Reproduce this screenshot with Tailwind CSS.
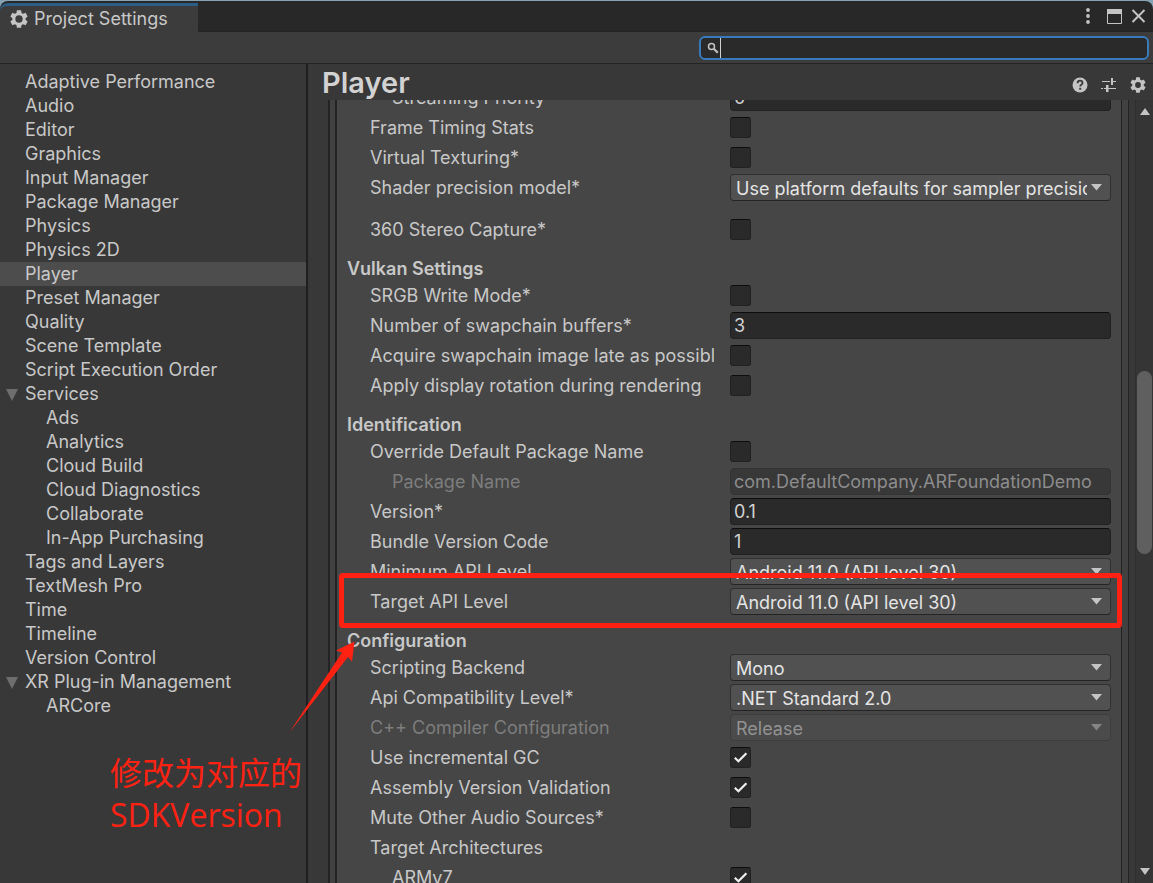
<!DOCTYPE html>
<html lang="zh">
<head>
  <meta charset="UTF-8">
  <meta name="viewport" content="width=device-width, initial-scale=1.0">
  <title>Project Settings</title>
  <script src="https://cdn.jsdelivr.net/npm/@tailwindcss/browser@4"></script>
</head>
<body class="bg-[#86a3b3] font-['Inter','Liberation_Sans',sans-serif] text-lg text-[#c8c8c8]">

  <div class="relative flex flex-col h-screen overflow-hidden border-t border-[#86a3b3]">

    <!-- Tab bar -->
    <header class="flex items-stretch justify-between h-[30px] shrink-0 rounded-t-lg bg-[#282828]">
      <div class="flex items-center gap-1 w-[198px] h-[29px] mt-[2px] pl-2 border-t-3 border-[#2c5d87] rounded-tl-lg bg-[#3c3c3c] leading-6 whitespace-nowrap z-10">
        <svg class="w-[22px] h-[22px] shrink-0" viewBox="0 0 24 24" fill="#c4c4c4"><path d="M19.14 12.94c.04-.3.06-.61.06-.94 0-.32-.02-.64-.07-.94l2.03-1.58c.18-.14.23-.41.12-.61l-1.92-3.32c-.12-.22-.37-.29-.59-.22l-2.39.96c-.5-.38-1.03-.7-1.62-.94L14.4 2.81c-.04-.24-.24-.41-.48-.41h-3.84c-.24 0-.43.17-.47.41L9.25 5.35c-.59.24-1.13.57-1.62.94l-2.39-.96c-.22-.08-.47 0-.59.22L2.74 8.87c-.12.21-.08.47.12.61l2.03 1.58c-.05.3-.09.63-.09.94s.02.64.07.94l-2.03 1.58c-.18.14-.23.41-.12.61l1.92 3.32c.12.22.37.29.59.22l2.39-.96c.5.38 1.03.7 1.62.94l.36 2.54c.05.24.24.41.48.41h3.84c.24 0 .44-.17.47-.41l.36-2.54c.59-.24 1.13-.56 1.62-.94l2.39.96c.22.08.47 0 .59-.22l1.92-3.32c.12-.22.07-.47-.12-.61l-2.01-1.58zM12 16a4 4 0 1 1 0-8 4 4 0 0 1 0 8z"/></svg>
        <h1>Project Settings</h1>
      </div>
      <div class="flex items-center gap-2 pr-[7px]">
        <button type="button" aria-label="Menu" class="w-[14px]">
          <svg class="w-[14px] h-[16px]" viewBox="0 0 14 16" fill="#c4c4c4"><circle cx="7" cy="2" r="1.900"/><circle cx="7" cy="8" r="1.900"/><circle cx="7" cy="14" r="1.900"/></svg>
        </button>
        <button type="button" aria-label="Maximize" class="ml-1">
          <svg class="w-[15px] h-[15px]" viewBox="0 0 15 15"><path d="M.5.5h14v14H.5z" fill="none" stroke="#c4c4c4"/><path d="M0 0h15v5H0z" fill="#c4c4c4"/></svg>
        </button>
        <button type="button" aria-label="Close" class="ml-px">
          <svg class="w-[15px] h-[14px]" viewBox="0 0 15 14" fill="none" stroke="#c4c4c4" stroke-width="2"><path d="M1.500 1l12 12M13.500 1l-12 12"/></svg>
        </button>
      </div>
    </header>

    <!-- Search -->
    <div class="flex justify-end items-center h-[33px] shrink-0 pr-1 bg-[#3c3c3c] border-t border-b border-[#232323]">
      <div class="flex items-center w-[450px] max-w-full h-6 pl-[6px] border-2 border-[#3a79bb] rounded-md bg-[#2a2a2a]">
        <svg class="w-[12px] h-[12px] shrink-0" viewBox="0 0 12 12" fill="none" stroke="#c4c4c4"><circle cx="4.500" cy="4.500" r="3" stroke-width="1.500"/><path d="M6.800 6.800l4 4" stroke-width="2"/></svg>
        <span class="w-px h-5 ml-[1px] bg-[#d2d2d2]"></span>
        <input type="text" aria-label="Search" class="flex-1 min-w-0 outline-none">
      </div>
    </div>

    <div class="flex flex-1 min-h-0">
      <!-- Categories -->
      <nav class="w-[308px] shrink-0 pt-[6px] bg-[#383838] border-r-2 border-[#1f1f1f]">
        <ul id="categories"></ul>
      </nav>

      <main class="flex flex-col flex-1 min-w-0 bg-[#383838]">
        <div class="flex items-center justify-between h-9 shrink-0 pl-[14px] pr-[7px]">
          <h2 class="pt-[2px] text-[29px] leading-9 font-semibold text-[#d2d2d2]">Player</h2>
          <div class="flex items-center gap-[13px] pt-[6px]">
            <button type="button" aria-label="Help">
              <svg class="w-[16px] h-[16px]" viewBox="0 0 16 16"><circle cx="8" cy="8" r="7.500" fill="#c4c4c4"/><path d="M5.600 6.200C5.600 4.600 6.600 3.700 8 3.700s2.500.9 2.500 2.200c0 1.700-2.300 1.800-2.300 3.600" fill="none" stroke="#383838" stroke-width="1.800"/><path d="M7.200 10.800h2v1.900h-2z" fill="#383838"/></svg>
            </button>
            <button type="button" aria-label="Presets">
              <svg class="w-[16px] h-[16px]" viewBox="0 0 16 16" fill="#c4c4c4"><path d="M1 4h8v1H1zM11 4h4v1h-4zM10 1h2v7h-2zM0 11h2v1H0zM3 11h2v1H3zM7 11h8v1H7zM5 8h2.500v7H5z"/></svg>
            </button>
            <button type="button" aria-label="Settings">
              <svg class="w-[16px] h-[16px]" viewBox="2 2 20 20" fill="#c4c4c4"><path d="M19.140 12.940c.04-.3.060-.61.060-.94 0-.32-.02-.64-.07-.94l2.030-1.580c.18-.14.23-.41.12-.61l-1.920-3.320c-.12-.22-.37-.29-.59-.22l-2.390.96c-.5-.38-1.030-.7-1.620-.94L14.400 2.810c-.04-.24-.24-.41-.48-.41h-3.840c-.24 0-.43.170-.47.410L9.250 5.350c-.59.240-1.130.570-1.620.940l-2.390-.96c-.22-.08-.47 0-.59.220L2.740 8.870c-.12.210-.08.470.12.610l2.030 1.580c-.05.300-.09.630-.09.940s.02.640.07.940l-2.030 1.580c-.18.140-.23.410-.12.610l1.920 3.320c.12.220.37.290.59.220l2.390-.96c.5.380 1.030.7 1.620.94l.36 2.540c.05.240.24.410.48.410h3.840c.24 0 .44-.17.47-.41l.36-2.540c.59-.24 1.130-.56 1.620-.94l2.390.96c.22.080.47 0 .59-.22l1.920-3.320c.12-.22.07-.47-.12-.61l-2.010-1.580zM12 15.600a3.600 3.600 0 1 1 0-7.200 3.600 3.600 0 0 1 0 7.200z"/></svg>
            </button>
          </div>
        </div>

        <div class="flex flex-1 min-h-0">
          <div class="flex-1 min-w-0 ml-5 mr-[6px] pl-[5px] pr-[6px] border-l-2 border-r border-[#232323] bg-[#414141] overflow-hidden">
            <form id="settings" class="h-full border-l-2 border-r border-[#232323] bg-[#464646] px-[10px] overflow-hidden"></form>
          </div>
          <!-- Scroll bar -->
          <div class="flex flex-col items-center justify-between w-[18px] shrink-0 pt-2 pb-2 bg-[#353535] border-l border-[#2e2e2e]">
            <svg class="w-[10px] h-[7px]" viewBox="0 0 10 7" fill="#c4c4c4"><path d="M0 7l5-7 5 7z"/></svg>
            <div class="flex flex-col w-[15px] flex-1">
              <div class="grow-[256]"></div>
              <div class="grow-[182] rounded-lg bg-[#5f5f5f]"></div>
              <div class="grow-[314]"></div>
            </div>
            <svg class="w-[10px] h-[7px]" viewBox="0 0 10 7" fill="#c4c4c4"><path d="M0 0l5 7 5-7z"/></svg>
          </div>
        </div>
      </main>
    </div>

    <!-- Notes drawn over the window -->
    <div class="absolute left-[339px] right-[31px] top-[572px] h-[55px] border-5 border-[#ff2213] rounded pointer-events-none"></div>
    <svg class="absolute left-[288px] top-[639px] w-[68px] h-[94px] pointer-events-none" viewBox="0 0 68 94" fill="#ff2213"><path d="M1 93L54 12.500 48 10.500 66.500 1.500 64 21.500 60 17z"/></svg>
    <p class="absolute left-[110px] top-[751px] text-[32px] leading-[42px] text-[#ff2213] font-['Open_Sans','Noto_Sans_CJK_SC',sans-serif] whitespace-nowrap">修改为对应的<br>SDKVersion</p>
  </div>

  <script>
    const categories = [
      "Adaptive Performance", "Audio", "Editor", "Graphics", "Input Manager", "Package Manager",
      "Physics", "Physics 2D", "Player", "Preset Manager", "Quality", "Scene Template",
      "Script Execution Order",
      { name: "Services", children: ["Ads", "Analytics", "Cloud Build", "Cloud Diagnostics", "Collaborate", "In-App Purchasing"] },
      "Tags and Layers", "TextMesh Pro", "Time", "Timeline", "Version Control",
      { name: "XR Plug-in Management", children: ["ARCore"] }
    ];

    const settings = [
      { label: "Streaming Priority", type: "text", value: "0", indent: true },
      { label: "Frame Timing Stats", type: "check" },
      { label: "Virtual Texturing*", type: "check" },
      { label: "Shader precision model*", type: "select", value: "Use platform defaults for sampler precision" },
      { type: "space" },
      { label: "360 Stereo Capture*", type: "check" },
      { label: "Vulkan Settings", type: "heading" },
      { label: "SRGB Write Mode*", type: "check" },
      { label: "Number of swapchain buffers*", type: "text", value: "3" },
      { label: "Acquire swapchain image late as possible*", type: "check" },
      { label: "Apply display rotation during rendering", type: "check" },
      { label: "Identification", type: "heading" },
      { label: "Override Default Package Name", type: "check" },
      { label: "Package Name", type: "text", value: "com.DefaultCompany.ARFoundationDemo", indent: true, disabled: true },
      { label: "Version*", type: "text", value: "0.1" },
      { label: "Bundle Version Code", type: "text", value: "1" },
      { label: "Minimum API Level", type: "select", value: "Android 11.0 (API level 30)" },
      { label: "Target API Level", type: "select", value: "Android 11.0 (API level 30)" },
      { label: "Configuration", type: "heading" },
      { label: "Scripting Backend", type: "select", value: "Mono" },
      { label: "Api Compatibility Level*", type: "select", value: ".NET Standard 2.0" },
      { label: "C++ Compiler Configuration", type: "select", value: "Release", disabled: true },
      { label: "Use incremental GC", type: "check", checked: true },
      { label: "Assembly Version Validation", type: "check", checked: true },
      { label: "Mute Other Audio Sources*", type: "check" },
      { label: "Target Architectures", type: "none" },
      { label: "ARMv7", type: "check", checked: true, indent: true }
    ];

    function categoryLink(name, pad, arrow) {
      const bg = name === "Player" ? "bg-[#4d4d4d]" : "";
      return `<a href="#" class="flex items-center h-6 ${pad} ${bg} whitespace-nowrap">${arrow}${name}</a>`;
    }

    const arrow = `<svg class="w-[12px] h-[12px] mt-[2px] mr-[7px]" viewBox="0 0 12 12" fill="#6e6e6e"><path d="M0 0h12L6 12z"/></svg>`;

    document.getElementById("categories").innerHTML = categories.map(c => {
      if (typeof c === "string") return `<li>${categoryLink(c, "pl-[25px]", "")}</li>`;
      const children = c.children.map(n => `<li>${categoryLink(n, "pl-[46px]", "")}</li>`).join("");
      return `<li>${categoryLink(c.name, "pl-[6px]", arrow)}<ul>${children}</ul></li>`;
    }).join("");

    function field(s, id) {
      const off = s.disabled ? "disabled" : "";
      if (s.type === "text") {
        return `<input id="${id}" type="text" value="${s.value}" ${off} class="block w-full h-[27px] px-[3px] rounded border border-[#212121] border-t-[#0d0d0d] bg-[#2a2a2a] text-[#d2d2d2] disabled:border-[#343434] disabled:bg-[#383838] disabled:text-[#8c8c8c] outline-none">`;
      }
      if (s.type === "select") {
        return `<div class="relative w-full">
          <select id="${id}" ${off} class="block w-full h-[27px] pl-[5px] pr-[23px] appearance-none rounded border border-[#303030] border-b-[#242424] bg-[#515151] text-[#e4e4e4] disabled:border-[#3d3d3d] disabled:bg-[#4b4b4b] disabled:text-[#929292] disabled:opacity-100 outline-none"><option>${s.value}</option></select>
          <svg class="absolute right-[9px] top-[10px] w-[11px] h-[7px] pointer-events-none" viewBox="0 0 11 7" fill="${s.disabled ? "#848484" : "#c4c4c4"}"><path d="M0 0h11L5.500 6.500z"/></svg>
        </div>`;
      }
      if (s.type === "check") {
        return `<span class="relative block w-[21px] h-[21px] mt-[3px]">
          <input id="${id}" type="checkbox" ${s.checked ? "checked" : ""} class="peer block w-full h-full appearance-none rounded-[3px] border border-[#212121] border-t-[#0d0d0d] bg-[#2a2a2a]">
          <svg class="absolute inset-0 w-full h-full hidden peer-checked:block pointer-events-none" viewBox="0 0 21 21" fill="none" stroke="#eeeeee" stroke-width="2.200"><path d="M4.800 10.800l3.600 3.400 8-8"/></svg>
        </span>`;
      }
      return "";
    }

    document.getElementById("settings").innerHTML = settings.map((s, i) => {
      if (s.type === "space") return `<div class="h-3"></div>`;
      if (s.type === "heading") return `<h3 class="h-9 pt-3 leading-6 font-semibold">${s.label}</h3>`;
      const id = "setting" + i;
      const pad = s.indent ? "pl-[45px]" : "pl-[23px]";
      const color = s.disabled ? "text-[#7d7d7d]" : "";
      const first = i === 0 ? "-mt-[17px]" : "";
      const tag = s.type === "none" ? "span" : "label";
      const target = s.type === "none" ? "" : `for="${id}"`;
      return `<div class="flex items-start h-[30px] ${first}">
        <${tag} ${target} class="w-[383px] shrink-0 ${pad} ${color} leading-[30px]"><span class="block mr-4 overflow-hidden whitespace-nowrap">${s.label}</span></${tag}>
        <div class="flex-1 min-w-0 pt-px">${field(s, id)}</div>
      </div>`;
    }).join("");
  </script>
</body>
</html>
